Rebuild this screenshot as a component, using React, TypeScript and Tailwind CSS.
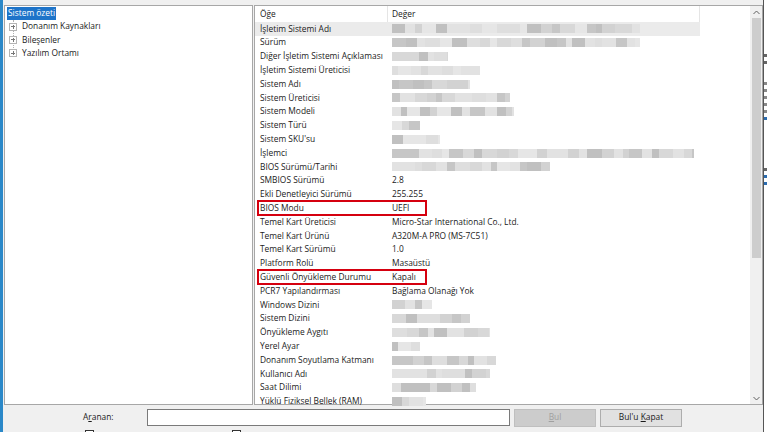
import React from "react";

type Row = { label: string; value?: string; blur?: number; hl?: boolean; box?: boolean };

const rows: Row[] = [
  { label: "İşletim Sistemi Adı", blur: 248, hl: true },
  { label: "Sürüm", blur: 248 },
  { label: "Diğer İşletim Sistemi Açıklaması", blur: 56 },
  { label: "İşletim Sistemi Üreticisi", blur: 88 },
  { label: "Sistem Adı", blur: 78 },
  { label: "Sistem Üreticisi", blur: 118 },
  { label: "Sistem Modeli", blur: 122 },
  { label: "Sistem Türü", blur: 28 },
  { label: "Sistem SKU'su", blur: 48 },
  { label: "İşlemci", blur: 302 },
  { label: "BIOS Sürümü/Tarihi", blur: 158 },
  { label: "SMBIOS Sürümü", value: "2.8" },
  { label: "Ekli Denetleyici Sürümü", value: "255.255" },
  { label: "BIOS Modu", value: "UEFI", box: true },
  { label: "Temel Kart Üreticisi", value: "Micro-Star International Co., Ltd." },
  { label: "Temel Kart Ürünü", value: "A320M-A PRO (MS-7C51)" },
  { label: "Temel Kart Sürümü", value: "1.0" },
  { label: "Platform Rolü", value: "Masaüstü" },
  { label: "Güvenli Önyükleme Durumu", value: "Kapalı", box: true },
  { label: "PCR7 Yapılandırması", value: "Bağlama Olanağı Yok" },
  { label: "Windows Dizini", blur: 40 },
  { label: "Sistem Dizini", blur: 78 },
  { label: "Önyükleme Aygıtı", blur: 98 },
  { label: "Yerel Ayar", blur: 28 },
  { label: "Donanım Soyutlama Katmanı", blur: 104 },
  { label: "Kullanıcı Adı", blur: 98 },
  { label: "Saat Dilimi", blur: 84 },
  { label: "Yüklü Fiziksel Bellek (RAM)", blur: 34 },
];

const shades = ["#d2d2d2", "#dedede", "#c6c6c6", "#e6e6e6", "#d8d8d8", "#c0c0c0", "#e2e2e2"];

function Blur({ width, seed }: { width: number; seed: number }) {
  const segs: { w: number; c: string }[] = [];
  let s = seed * 9301 + 49297;
  let used = 0;
  while (used < width) {
    s = (s * 9301 + 49297) % 233280;
    const w = Math.min(6 + (s % 10), width - used);
    segs.push({ w, c: shades[s % shades.length] });
    used += w;
  }
  return (
    <div className="flex h-[9px]">
      {segs.map((g, i) => (
        <div key={i} style={{ width: g.w, backgroundColor: g.c }} />
      ))}
    </div>
  );
}

function Plus() {
  return (
    <span className="w-[8px] h-[8px] border border-[#b4b4b4] bg-white flex items-center justify-center relative">
      <span className="absolute w-[4px] h-px bg-[#777]" />
      <span className="absolute w-px h-[4px] bg-[#777]" />
    </span>
  );
}

export default function App() {
  const font = { fontFamily: '"Open Sans", "Noto Sans", sans-serif' };
  return (
    <div className="w-[768px] h-[432px] overflow-hidden flex bg-[#f0f0f0] text-[#1a1a1a] text-[8.4px] leading-none" style={font}>
      <div className="w-[3px] bg-[#2b88c8]" />
      <div className="w-[760px] flex flex-col">
        <div className="h-[405px] pt-[5px] pl-[1px] flex gap-[1px]">
          {/* tree */}
          <div className="w-[249px] border border-[#a7a7a7] bg-white pt-[1px] pl-[2px]">
            <div className="h-[13px] flex items-center">
              <span className="bg-[#1e74c9] text-white px-[1px] h-[13px] flex items-center">Sistem özeti</span>
            </div>
            <div className="relative">
              <div className="absolute left-[6px] top-0 h-[34px] border-l border-dotted border-[#b0b0b0]" />
              {["Donanım Kaynakları", "Bileşenler", "Yazılım Ortamı"].map((t) => (
                <div key={t} className="h-[13.3px] flex items-center gap-[5px] pl-[2px] relative">
                  <Plus />
                  <span>{t}</span>
                </div>
              ))}
            </div>
          </div>
          {/* list */}
          <div className="flex-1 border border-[#a7a7a7] bg-white flex">
            <div className="flex-1 flex flex-col">
              <div className="h-[16px] flex items-center shrink-0">
                <div className="w-[133px] h-full flex items-center pl-[5px] border-r border-[#e5e5e5]">Öğe</div>
                <div className="w-[312px] h-full flex items-center pl-[4px] border-r border-[#e5e5e5]">Değer</div>
              </div>
              {rows.map((r, i) => (
                <div key={r.label} className="h-[13.8px] flex items-center shrink-0">
                  <div className={`w-[445px] h-full flex items-center ${r.hl ? "bg-[#ebebeb]" : ""}`}>
                    <div className="w-[133px] pl-[5px] relative h-full flex items-center">
                      {r.box && (
                        <div className="absolute left-[2px] top-[-1px] h-[16px] w-[170px] border-[2.5px] border-[#d5000f]" />
                      )}
                      {r.label}
                    </div>
                    <div className="pl-[4px] flex items-center">
                      {r.value ? r.value : <Blur width={r.blur ?? 40} seed={i + 3} />}
                    </div>
                  </div>
                </div>
              ))}
            </div>
            {/* scrollbar */}
            <div className="w-[12px] bg-[#f0f0f0] flex flex-col items-center">
              <div className="h-[12px] flex items-center justify-center">
                <svg width="7" height="5" viewBox="0 0 7 5"><path d="M0.5 4 L3.5 1 L6.5 4" fill="none" stroke="#606060" strokeWidth="1" /></svg>
              </div>
              <div className="w-[9px] h-[240px] bg-[#cdcdcd]" />
              <div className="flex-1" />
              <div className="h-[12px] flex items-center justify-center">
                <svg width="7" height="5" viewBox="0 0 7 5"><path d="M0.5 1 L3.5 4 L6.5 1" fill="none" stroke="#606060" strokeWidth="1" /></svg>
              </div>
            </div>
          </div>
        </div>
        {/* bottom */}
        <div className="flex-1 flex flex-col">
          <div className="h-[19px] mt-[3px] flex items-center">
            <span className="ml-[80px] w-[64px]">A<span className="underline">r</span>anan:</span>
            <div className="w-[363px] h-[17px] border border-[#7a7a7a] bg-white" />
            <div className="ml-[4px] w-[82px] h-[18px] bg-[#cccccc] border border-[#bfbfbf] flex items-center justify-center text-[#a0a0a0]">
              <span className="underline">B</span>ul
            </div>
            <div className="ml-[4px] w-[82px] h-[18px] bg-[#e1e1e1] border border-[#adadad] flex items-center justify-center">
              Bul'u&nbsp;<span className="underline">K</span>apat
            </div>
          </div>
          <div className="flex mt-[3px]">
            <div className="ml-[82px] w-[9px] h-[9px] border border-[#333] bg-white" />
            <div className="ml-[138px] w-[9px] h-[9px] border border-[#333] bg-white" />
          </div>
        </div>
      </div>
      <div className="w-[5px] border-l border-[#555] bg-white flex flex-col pt-[54px] gap-[4px]">
        <div className="w-[3px] h-[3px] bg-[#666]" />
        <div className="w-[3px] h-[3px] bg-[#666]" />
        <div className="h-[10px]" />
        <div className="w-[3px] h-[3px] bg-[#888]" />
        <div className="w-[3px] h-[3px] bg-[#888]" />
        <div className="w-[3px] h-[3px] bg-[#888]" />
        <div className="w-[3px] h-[3px] bg-[#888]" />
        <div className="w-[3px] h-[3px] bg-[#888]" />
        <div className="w-[3px] h-[3px] bg-[#2b6cb0]" />
        <div className="h-[40px]" />
        <div className="w-[3px] h-[3px] bg-[#666]" />
        <div className="w-[3px] h-[3px] bg-[#2b6cb0]" />
        <div className="w-[3px] h-[3px] bg-[#2b6cb0]" />
      </div>
    </div>
  );
}
